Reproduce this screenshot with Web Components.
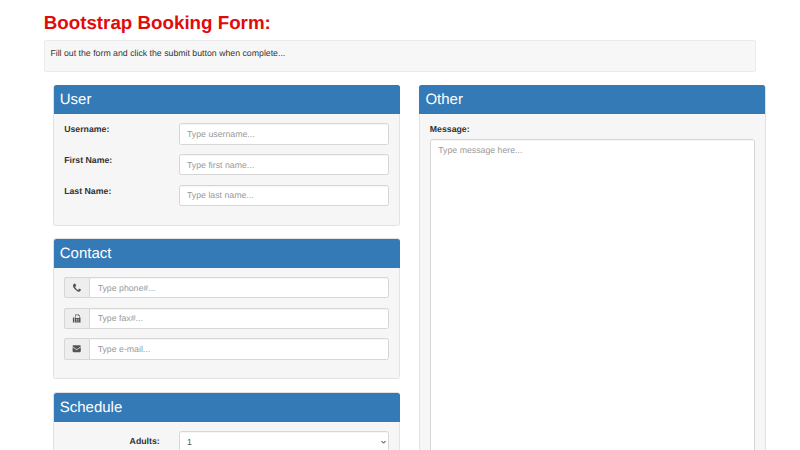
<!DOCTYPE html>
<html>
<head>
<meta charset="utf-8">
<title>Bootstrap Booking Form</title>
<style>
    html, body { margin: 0; height: 450px; overflow: hidden; background: #fff; }
    body { font: 14px/20px "Liberation Sans", Arial, sans-serif; color: #333; text-rendering: geometricPrecision; }
</style>
</head>
<body>
<template id="tpl-page">
    <style>
        /* the page is laid out for a 1280 wide window and shrunk to 800 */
        :host { display: block; box-sizing: border-box; width: 1280px; padding: 20px 40px 0 70px; zoom: .625; }
        h2 { margin: 0 0 11px; font-size: 30px; line-height: 33px; font-weight: bold; color: #e00b0b; }
        .well { width: 1140px; box-sizing: border-box; padding: 9px; margin-bottom: 20px; background: #f7f7f7; border: 1px solid #ebebeb; border-radius: 3px; }
        .well p { margin: 0 0 10px; }
        .cols { display: grid; grid-template-columns: 555px 555px; column-gap: 30px; margin-left: 15px; }
        .col { display: flex; flex-direction: column; gap: 20.500px; }
    </style>
    <h2><slot name="title"></slot></h2>
    <div class="well"><p><slot name="note"></slot></p></div>
    <div class="cols">
        <div class="col"><slot name="left"></slot></div>
        <div class="col"><slot name="right"></slot></div>
    </div>
</template>

<template id="tpl-panel">
    <style>
        :host { display: block; background: #f6f6f6; border: 1px solid #e2e2e2; border-radius: 4px; }
        .head { margin: -1px -1px 0; padding: 12px 10px 8px; background: #337ab7; color: #fff; font-size: 24px; line-height: 26.400px; border-radius: 4px 4px 0 0; }
        .body { padding: 15px 16px; display: flex; flex-direction: column; gap: 15px; }
        :host([pad]) .body { padding-bottom: 30px; }
    </style>
    <div class="head"><slot name="heading"></slot></div>
    <div class="body"><slot></slot></div>
</template>

<template id="tpl-row">
    <style>
        :host { display: grid; grid-template-columns: 183px 1fr; height: 34px; }
        label { font-weight: bold; }
        :host([right]) label { text-align: right; padding: 7px 30px 0 0; }
        input, select { display: block; box-sizing: border-box; width: 100%; height: 34px; margin: 0; padding: 6px 12px; font: 14px/20px "Liberation Sans", Arial, sans-serif; text-rendering: geometricPrecision; color: #555; background: #fff; border: 1px solid #d6d6d6; border-radius: 4px; box-shadow: inset 0 1px 1px rgba(0,0,0,.05); }
        input::placeholder { color: #999; opacity: 1; }
        select { appearance: none; -webkit-appearance: none; }
        #field { position: relative; }
        #field svg { position: absolute; right: 5px; top: 14px; width: 8px; height: 7px; fill: none; stroke: #333; stroke-width: 2; pointer-events: none; }
    </style>
    <label><slot></slot></label>
    <div id="field"></div>
</template>

<template id="tpl-icon-input">
    <style>
        :host { display: flex; height: 34px; }
        .addon { box-sizing: border-box; flex: none; width: 40px; display: flex; align-items: center; justify-content: center; background: #eee; border: 1px solid #d6d6d6; border-right: 0; border-radius: 4px 0 0 4px; color: #555; }
        svg { width: 15px; height: 15px; fill: currentColor; }
        input { box-sizing: border-box; flex: 1; min-width: 0; height: 34px; margin: 0; padding: 6px 12px; font: 14px/20px "Liberation Sans", Arial, sans-serif; text-rendering: geometricPrecision; color: #555; background: #fff; border: 1px solid #d6d6d6; border-radius: 0 4px 4px 0; box-shadow: inset 0 1px 1px rgba(0,0,0,.05); }
        input::placeholder { color: #999; opacity: 1; }
    </style>
    <span class="addon"><svg viewBox="0 0 16 16"></svg></span>
    <input type="text">
</template>

<template id="tpl-message">
    <style>
        :host { display: block; }
        label { display: block; font-weight: bold; margin-bottom: 5px; }
        textarea { display: block; box-sizing: border-box; width: 100%; height: 600px; margin: 0; padding: 6px 12px; resize: none; font: 14px/20px "Liberation Sans", Arial, sans-serif; text-rendering: geometricPrecision; color: #555; background: #fff; border: 1px solid #d6d6d6; border-radius: 4px; box-shadow: inset 0 1px 1px rgba(0,0,0,.05); }
        textarea::placeholder { color: #999; opacity: 1; }
    </style>
    <label><slot></slot></label>
    <textarea></textarea>
</template>

<booking-page>
    <span slot="title">Bootstrap Booking Form:</span>
    <span slot="note">Fill out the form and click the submit button when complete...</span>
    <booking-panel slot="left" pad>
        <span slot="heading">User</span>
        <form-row hint="Type username...">Username:</form-row>
        <form-row hint="Type first name...">First Name:</form-row>
        <form-row hint="Type last name...">Last Name:</form-row>
    </booking-panel>
    <booking-panel slot="left" pad>
        <span slot="heading">Contact</span>
        <icon-input icon="phone" hint="Type phone#..."></icon-input>
        <icon-input icon="fax" hint="Type fax#..."></icon-input>
        <icon-input icon="mail" hint="Type e-mail..."></icon-input>
    </booking-panel>
    <booking-panel slot="left">
        <span slot="heading">Schedule</span>
        <form-row right options="1,2,3,4">Adults:</form-row>
    </booking-panel>
    <booking-panel slot="right">
        <span slot="heading">Other</span>
        <message-box hint="Type message here...">Message:</message-box>
    </booking-panel>
</booking-page>

<script>
    // icon shapes, drawn on a 16 unit box
    var ICONS = {
        phone: 'M15 11.600c0 .3-.1.8-.2 1.300-.2.600-1.200 1.200-1.800 1.500-.5.300-1 .5-1.600.5-1.600 0-3.400-1.200-5.500-3.400C3.400 9.100 1.600 6.700 1.600 4.500c0-.6.200-1.100.5-1.600.3-.6.900-1.600 1.500-1.800.5-.1 1-.2 1.300-.2h.3c.2.100.4.500.6.800l.9 1.600.5.800c.1.200.1.300.1.400 0 .5-1.400 1.300-1.900 1.800-.2.200-.2.300-.2.500 0 .8 3.400 4.500 4.600 5 .2.100.3.100.4.100.5 0 1.400-1.500 1.900-2 .1-.1.300-.2.500-.2s.3.100.4.100l2.400 1.400c.3.200.6.300.6.500z',
        fax: 'M1.500 6h2.500v8.500H1.500zM5 6h.2V1h6.300L13.500 3v3h1v8.500H5zM6.200 2v4.800h6.300V3.500H11V2zM6.800 8.500V10h1.500V8.500zm3 0V10h1.500V8.500zM6.800 11.300v1.500h1.500v-1.500zm3 0v1.500h1.500v-1.500z',
        mail: 'M1 3.500C1 2.700 1.700 2 2.500 2h11c.8 0 1.500.7 1.500 1.500v.6L8 8.800 1 4.100zM1 5.700V12.500c0 .8.700 1.500 1.500 1.500h11c.8 0 1.500-.7 1.500-1.500V5.700L8 10.400z'
    };

    function open(el, id) {
        var root = el.attachShadow({mode: 'open'});
        root.appendChild(document.getElementById(id).content.cloneNode(true));
        return root;
    }

    class BookingPage extends HTMLElement {
        constructor() { super(); open(this, 'tpl-page'); }
    }

    class BookingPanel extends HTMLElement {
        constructor() { super(); open(this, 'tpl-panel'); }
    }

    class FormRow extends HTMLElement {
        connectedCallback() {
            var root = this.shadowRoot || open(this, 'tpl-row');
            var field = root.getElementById('field');
            if (field.firstChild) return;
            if (this.hasAttribute('options')) {
                var select = document.createElement('select');
                this.getAttribute('options').split(',').forEach(function (v) {
                    select.add(new Option(v, v));
                });
                field.appendChild(select);
                field.insertAdjacentHTML('beforeend', '<svg viewBox="0 0 10 8"><path d="M1 1.500 5 6 9 1.500"/></svg>');
            } else {
                var input = document.createElement('input');
                input.type = 'text';
                input.placeholder = this.getAttribute('hint');
                field.appendChild(input);
            }
        }
    }

    class IconInput extends HTMLElement {
        connectedCallback() {
            var root = this.shadowRoot || open(this, 'tpl-icon-input');
            root.querySelector('svg').innerHTML = '<path fill-rule="evenodd" d="' + ICONS[this.getAttribute('icon')] + '"/>';
            root.querySelector('input').placeholder = this.getAttribute('hint');
        }
    }

    class MessageBox extends HTMLElement {
        connectedCallback() {
            var root = this.shadowRoot || open(this, 'tpl-message');
            root.querySelector('textarea').placeholder = this.getAttribute('hint');
        }
    }

    customElements.define('booking-page', BookingPage);
    customElements.define('booking-panel', BookingPanel);
    customElements.define('form-row', FormRow);
    customElements.define('icon-input', IconInput);
    customElements.define('message-box', MessageBox);
</script>
</body>
</html>
